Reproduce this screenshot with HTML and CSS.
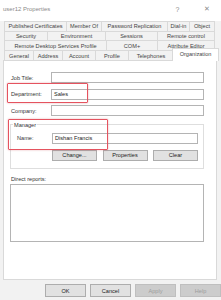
FILE: index.html
```html
<!DOCTYPE html>
<html>
<head>
<meta charset="utf-8">
<link rel="stylesheet" href="styles.css">
</head>
<body>
<div class="dlg">
  <div class="titlebar">
    <span class="title">user12 Properties</span>
    <span class="tbtn help">?</span>
    <span class="tbtn close">✕</span>
  </div>
  <div class="tabs">
    <div class="trow r1">
      <div class="tab">Published Certificates</div>
      <div class="tab">Member Of</div>
      <div class="tab">Password Replication</div>
      <div class="tab">Dial-in</div>
      <div class="tab">Object</div>
    </div>
    <div class="trow r2">
      <div class="tab">Security</div>
      <div class="tab">Environment</div>
      <div class="tab">Sessions</div>
      <div class="tab">Remote control</div>
    </div>
    <div class="trow r3">
      <div class="tab">Remote Desktop Services Profile</div>
      <div class="tab">COM+</div>
      <div class="tab">Attribute Editor</div>
    </div>
    <div class="trow r4">
      <div class="tab">General</div>
      <div class="tab">Address</div>
      <div class="tab">Account</div>
      <div class="tab">Profile</div>
      <div class="tab">Telephones</div>
      <div class="tab active">Organization</div>
    </div>
  </div>
  <div class="panel">
    <div class="field"><span class="lbl">Job Title:</span><div class="input"></div></div>
    <div class="field"><span class="lbl">Department:</span><div class="input">Sales</div></div>
    <div class="field"><span class="lbl">Company:</span><div class="input"></div></div>
    <fieldset class="group">
      <legend>Manager</legend>
      <div class="field gfield"><span class="lbl">Name:</span><div class="input">Dishan Francis</div></div>
      <div class="gbtns">
        <div class="btn">Change...</div>
        <div class="btn">Properties</div>
        <div class="btn">Clear</div>
      </div>
    </fieldset>
    <div class="dr-lbl">Direct reports:</div>
    <div class="list"></div>
    <div class="mark m1"></div>
    <div class="mark m2"></div>
  </div>
  <div class="footer">
    <div class="btn fbtn">OK</div>
    <div class="btn fbtn">Cancel</div>
    <div class="btn fbtn dis">Apply</div>
    <div class="btn fbtn dis">Help</div>
  </div>
</div>
</body>
</html>
```
FILE: styles.css
```css
* { box-sizing: border-box; }
html, body { margin: 0; padding: 0; }
body {
  width: 221px;
  height: 300px;
  overflow: hidden;
  background: #f2f2f2;
  font-family: "Liberation Sans", Arial, sans-serif;
  font-size: 5.6px;
  color: #333;
}
.dlg { width: 221px; height: 300px; }
.titlebar {
  height: 21px;
  background: #ffffff;
  display: flex;
  align-items: center;
  padding-left: 3px;
  padding-bottom: 3px;
  position: relative;
}
.title { color: #8a8a8a; font-size: 6px; flex: 1; }
.tbtn { color: #8a8a8a; font-size: 7px; width: 29px; text-align: center; }
.help { margin-right: 0; }
.close { font-size: 6.5px; }

.tabs { padding-left: 4px; width: 217px; }
.trow { display: grid; height: 9.7px; }
.r1 { grid-template-columns: 62px 35px 66px 22px 26px; }
.r2 { grid-template-columns: 43px 58px 52px 58px; }
.r3 { grid-template-columns: 102px 51px 58px; }
.r4 { grid-template-columns: 29px 29px 33px 33px 45px 46px; height: 10px; }
.tab {
  border: 1px solid #d9d9d9;
  border-right: none;
  border-bottom: none;
  background: #f2f2f2;
  display: flex;
  align-items: center;
  justify-content: center;
  white-space: nowrap;
  overflow: hidden;
  color: #444;
}
.tab:last-child { border-right: 1px solid #d9d9d9; }
.tab.active {
  background: #ffffff;
  margin-top: -2px;
  height: 13px;
  margin-left: -1px;
  position: relative;
  z-index: 2;
  padding-bottom: 2px;
}

.panel {
  margin-left: 3px;
  width: 214px;
  height: 220px;
  background: #ffffff;
  border: 1px solid #d9d9d9;
  position: relative;
  padding-top: 11px;
}
.field {
  display: flex;
  align-items: center;
  height: 11px;
  padding-left: 7px;
  margin-bottom: 5.5px;
}
.lbl { width: 40px; color: #333; white-space: nowrap; }
.input {
  width: 153px;
  height: 11px;
  border: 1px solid #b4b4b4;
  background: #fff;
  padding-left: 2px;
  display: flex;
  align-items: center;
  color: #222;
}
.group {
  margin: 2px 0 0 6px;
  width: 194px;
  height: 47px;
  border: 1px solid #dedede;
  padding: 0;
  position: relative;
}
.group legend {
  padding: 0 1px;
  margin-left: 2px;
  font-size: 5.6px;
  color: #333;
  line-height: 6px;
}
.gfield { padding-left: 6px; margin-top: 5px; margin-bottom: 6px; }
.gfield .lbl { width: 35px; }
.gfield .input { width: 146px; }
.gbtns { display: flex; gap: 5.5px; padding-left: 41px; }
.btn {
  background: #e1e1e1;
  border: 1px solid #adadad;
  display: flex;
  align-items: center;
  justify-content: center;
  color: #222;
  white-space: nowrap;
}
.gbtns .btn { width: 45px; height: 11px; }
.dr-lbl { margin: 6px 0 0 7px; height: 8px; line-height: 8px; }
.list {
  margin: 1px 0 0 6px;
  width: 194px;
  height: 58px;
  border: 1px solid #b4b4b4;
}
.mark {
  position: absolute;
  border: 1.5px solid #e5535f;
  box-shadow: 0 0 2px rgba(200,60,70,0.45);
  border-radius: 1px;
}
.m1 { left: 3px; top: 22px; width: 81px; height: 20px; }
.m2 { left: 4px; top: 58px; width: 100px; height: 31px; }

.footer {
  display: flex;
  gap: 4px;
  padding-left: 45px;
  margin-top: 4px;
}
.fbtn { width: 41px; height: 13px; background: #e1e1e1; }
.fbtn.dis { background: #cccccc; border-color: #bfbfbf; color: #9d9d9d; }
```
